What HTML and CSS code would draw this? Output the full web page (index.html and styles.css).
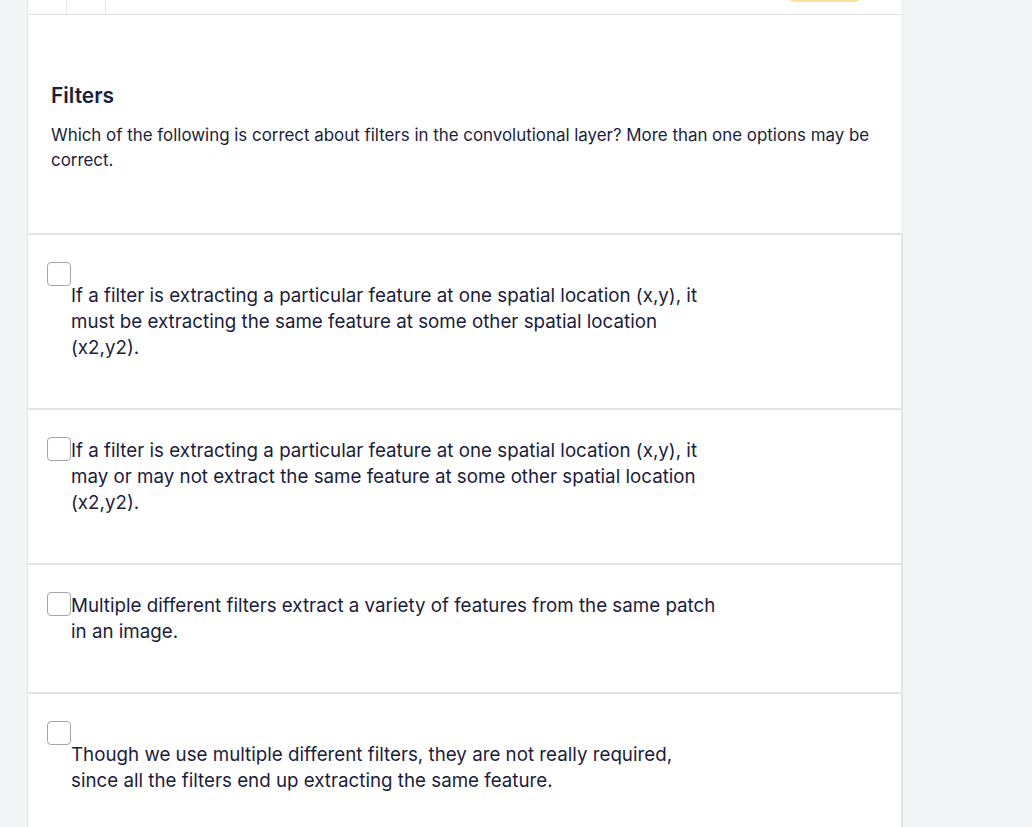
FILE: index.html
```html
<html>
<head>
<link rel="stylesheet" href="styles.css">
<meta charset="UTF-8">
<title>Quiz - Filters</title>
</head>
<body>
  <div class="page">
    <div class="card">
      <div class="topbar">
        <div class="tab"></div>
        <div class="tab"></div>
        <div class="pill"></div>
      </div>

      <div class="question">
        <h2 class="qtitle">Filters</h2>
        <p class="qtext">Which of the following is correct about filters in the convolutional layer? More than one options may be<br>correct.</p>
      </div>

      <label class="option stacked">
        <span class="box"></span>
        <span class="otext">If a filter is extracting a particular feature at one spatial location (x,y), it<br>must be extracting the same feature at some other spatial location<br>(x2,y2).</span>
      </label>
      <label class="option">
        <span class="box"></span>
        <span class="otext">If a filter is extracting a particular feature at one spatial location (x,y), it<br>may or may not extract the same feature at some other spatial location<br>(x2,y2).</span>
      </label>
      <label class="option">
        <span class="box"></span>
        <span class="otext">Multiple different filters extract a variety of features from the same patch<br>in an image.</span>
      </label>
      <label class="option stacked">
        <span class="box"></span>
        <span class="otext">Though we use multiple different filters, they are not really required,<br>since all the filters end up extracting the same feature.</span>
      </label>
    </div>
  </div>
</body>
</html>
```

FILE: styles.css
```css
* {
  box-sizing: border-box;
}

body {
  margin: 0;
  background-color: #f3f4f6;
  font-family: Inter, "Liberation Sans", sans-serif;
  color: #1c1d3c;
}

.page {
  padding-left: 27px;
  height: 827px;
  overflow: hidden;
}

.card {
  width: 876px;
  background-color: #ffffff;
  border-left: 1px solid #e3e4e8;
  min-height: 827px;
}

/* strip at the very top, mostly scrolled away */
.topbar {
  display: flex;
  height: 15px;
  border-bottom: 1px solid #e2e3e8;
  border-right: 1px solid #ebebef;
}
.tab {
  width: 39px;
  border-right: 1px solid #e6e7eb;
}
.pill {
  margin-left: auto;
  margin-right: 38px;
  margin-top: -18px;
  width: 79px;
  height: 20px;
  border-radius: 10px;
  background-color: #fbe1a0;
}

.question {
  padding: 66px 24px 59px 23px;
  border-right: 1px solid #ebebef;
  height: 218px;
}
.qtitle {
  margin: 0 0 13px 0;
  font-size: 21px;
  font-weight: 600;
  line-height: 29px;
}
.qtext {
  margin: 0;
  font-size: 16.9px;
  line-height: 25px;
}

.option {
  display: flex;
  align-items: flex-start;
  padding: 27px 24px 47px 19px;
  border-top: 2px solid #e3e4e9;
  border-right: 2px solid #e3e4e9;
  font-size: 18.75px;
  line-height: 26px;
}
.otext {
  padding-top: 1px;
}
.option.stacked {
  flex-direction: column;
}
.option.stacked .otext {
  margin-top: -4px;
  padding-left: 24px;
}
.box {
  flex: none;
  width: 24px;
  height: 24px;
  border: 1.5px solid #a2a6ae;
  border-radius: 4px;
  background-color: #ffffff;
}
```
